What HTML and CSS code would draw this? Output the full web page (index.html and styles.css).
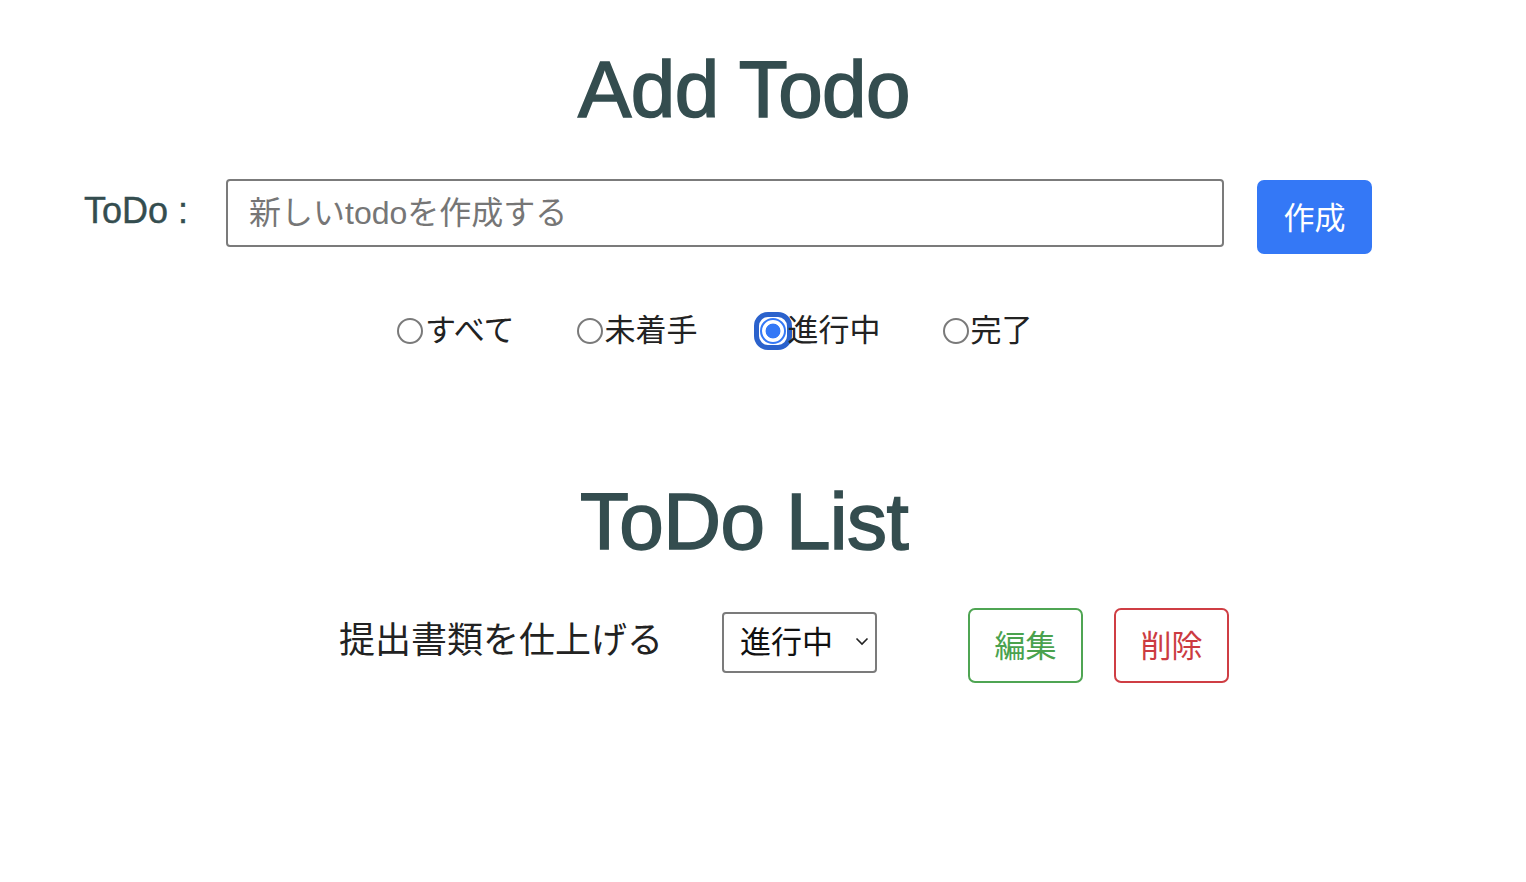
FILE: index.html
```html
<!DOCTYPE html>
<html lang="ja">
<head>
<meta charset="utf-8">
<title>Todo</title>
<link rel="stylesheet" href="styles.css">
</head>
<body>
<main class="page">
  <section class="add">
    <h1 class="title">Add Todo</h1>
    <div class="form-row">
      <label class="form-label" for="todo">ToDo :</label>
      <input class="todo-input" id="todo" type="text" placeholder="新しいtodoを作成する">
      <button class="btn btn-primary" type="button">作成</button>
    </div>
    <div class="filter-row">
      <label class="filter"><span class="radio-wrap"><input class="radio" type="radio" name="filter"></span><span class="filter-text">すべて</span></label>
      <label class="filter"><span class="radio-wrap"><input class="radio" type="radio" name="filter"></span><span class="filter-text">未着手</span></label>
      <label class="filter"><span class="radio-wrap is-focus"><input class="radio" type="radio" name="filter" checked></span><span class="filter-text">進行中</span></label>
      <label class="filter"><span class="radio-wrap"><input class="radio" type="radio" name="filter"></span><span class="filter-text">完了</span></label>
    </div>
  </section>
  <section class="list">
    <h2 class="title title-list">ToDo List</h2>
    <div class="todo-row">
      <span class="todo-text">提出書類を仕上げる</span>
      <div class="select-wrap">
        <select class="status-select">
          <option>未着手</option>
          <option selected>進行中</option>
          <option>完了</option>
        </select>
        <svg class="chevron" width="14" height="9" viewBox="0 0 14 9"><path d="M1.5 1.5 L7 7 L12.5 1.5" fill="none" stroke="#222" stroke-width="1.6"/></svg>
      </div>
      <button class="btn btn-edit" type="button">編集</button>
      <button class="btn btn-delete" type="button">削除</button>
    </div>
  </section>
</main>
</body>
</html>
```
FILE: styles.css
```css
* { box-sizing: border-box; }
body {
  margin: 0;
  font-family: "Liberation Sans", "Noto Sans CJK JP", sans-serif;
  color: #222;
  background: #fff;
}
.page {
  width: 1488px;
}
.title {
  margin: 50px 0 0;
  text-align: center;
  font-size: 80px;
  line-height: 80px;
  font-weight: normal;
  color: #344d4f;
  letter-spacing: -0.6px;
  -webkit-text-stroke: 1.6px #344d4f;
}
.title-list {
  margin-top: 133px;
}
.form-row {
  display: flex;
  align-items: flex-start;
  margin-top: 49px;
  padding-left: 84px;
}
.form-label {
  font-size: 36px;
  line-height: 36px;
  margin-top: 14px;
  color: #344d4f;
  -webkit-text-stroke: 0.4px #344d4f;
}
.todo-input {
  margin-left: 38px;
  width: 998px;
  height: 68px;
  border: 2px solid #7b7b7b;
  border-radius: 4px;
  padding: 0 0 0 21px;
  font-family: "Liberation Sans", "Noto Sans CJK JP", sans-serif;
  font-size: 32px;
  color: #222;
  outline: none;
}
.todo-input::placeholder {
  color: #767676;
}
.btn {
  width: 115px;
  font-family: "Liberation Sans", "Noto Sans CJK JP", sans-serif;
  font-size: 31px;
  border-radius: 7px;
  padding: 0;
  cursor: pointer;
}
.btn-primary {
  margin-left: 33px;
  margin-top: 1px;
  height: 74px;
  padding-bottom: 4px;
  background: #3478f6;
  border: none;
  color: #fff;
}
.filter-row {
  display: flex;
  align-items: center;
  margin-top: 59px;
  padding-left: 397px;
  height: 36px;
}
.filter {
  display: inline-flex;
  align-items: center;
  margin-right: 62px;
  font-size: 31px;
  line-height: 36px;
  color: #222;
}
.radio-wrap {
  display: inline-flex;
  width: 26px;
  height: 26px;
  border-radius: 9px;
}
.radio-wrap.is-focus {
  outline: 5px solid #2b62cc;
  outline-offset: 1px;
  border-radius: 8px;
}
.radio {
  appearance: none;
  -webkit-appearance: none;
  margin: 0;
  width: 26px;
  height: 26px;
  border: 2px solid #7a7a7a;
  border-radius: 50%;
  background: #fff;
}
.radio:checked {
  border: 2.5px solid #3478f6;
  background: radial-gradient(circle, #3478f6 0 7px, #fff 7.8px);
}
.filter-text {
  margin-left: 2px;
}
.todo-row {
  display: flex;
  align-items: flex-start;
  margin-top: 46px;
  padding-left: 339px;
}
.todo-text {
  margin-top: 15px;
  font-size: 36px;
  line-height: 36px;
  color: #222;
}
.select-wrap {
  position: relative;
  margin-left: 59px;
  margin-top: 4px;
  width: 155px;
  height: 61px;
  border: 2px solid #7b7b7b;
  border-radius: 4px;
}
.status-select {
  appearance: none;
  -webkit-appearance: none;
  width: 100%;
  height: 100%;
  border: none;
  background: transparent;
  padding: 0 0 0 16px;
  font-family: "Liberation Sans", "Noto Sans CJK JP", sans-serif;
  font-size: 31px;
  color: #111;
  outline: none;
}
.chevron {
  position: absolute;
  right: 6px;
  top: 23px;
  pointer-events: none;
}
.btn-edit {
  margin-left: 91px;
  height: 75px;
  padding-bottom: 4px;
  background: #fff;
  border: 2px solid #4fa553;
  color: #4aa24e;
}
.btn-delete {
  margin-left: 31px;
  height: 75px;
  padding-bottom: 4px;
  background: #fff;
  border: 2px solid #cf3e44;
  color: #cc3b41;
}
```
